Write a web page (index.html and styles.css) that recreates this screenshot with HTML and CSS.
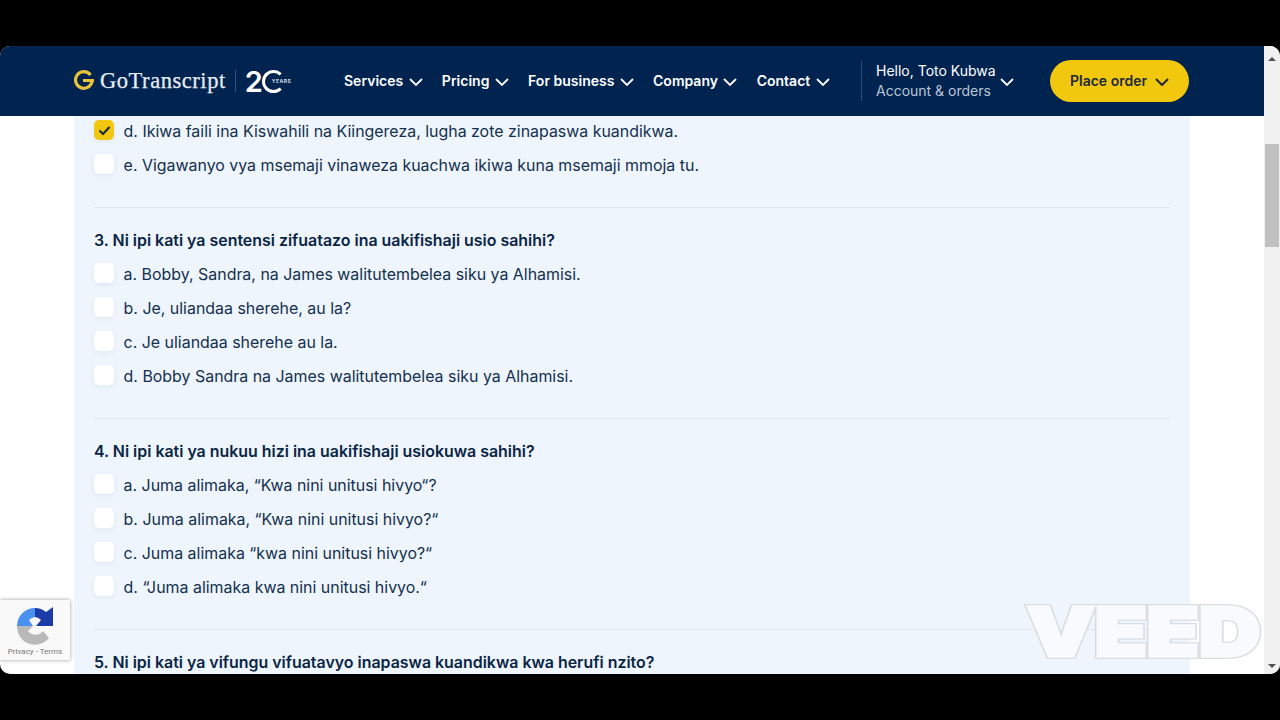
FILE: index.html
```html
<!DOCTYPE html>
<html lang="en">
<head>
    <meta charset="UTF-8">
    <meta name="viewport" content="width=device-width, initial-scale=1.0">
    <title>GoTranscript Quiz</title>
    <link rel="stylesheet" href="styles.css">
</head>
<body>
    <div class="window">
        <div class="page">
            <header class="topbar">
                <div class="logo">
                    <svg class="logo-mark" width="20" height="22" viewBox="0 0 20 22" fill="none">
                        <path d="M16.500 5A8.300 8.300 0 1 0 18 11.500" stroke="#e8c33a" stroke-width="3.200"/>
                        <path d="M9 10.500H20" stroke="#e8c33a" stroke-width="3"/>
                    </svg>
                    <span class="logo-name">GoTranscript</span>
                    <span class="logo-rule"></span>
                    <span class="logo-two">2</span>
                    <span class="logo-ring"></span>
                    <span class="logo-years">YEARS</span>
                </div>
                <nav class="nav">
                    <a class="nav-link"><span>Services</span> <svg class="chev" width="14" height="8" viewBox="0 0 14 8"><path d="M1 1l6 6 6-6"/></svg></a>
                    <a class="nav-link"><span>Pricing</span> <svg class="chev" width="14" height="8" viewBox="0 0 14 8"><path d="M1 1l6 6 6-6"/></svg></a>
                    <a class="nav-link"><span>For business</span> <svg class="chev" width="14" height="8" viewBox="0 0 14 8"><path d="M1 1l6 6 6-6"/></svg></a>
                    <a class="nav-link"><span>Company</span> <svg class="chev" width="14" height="8" viewBox="0 0 14 8"><path d="M1 1l6 6 6-6"/></svg></a>
                    <a class="nav-link"><span>Contact</span> <svg class="chev" width="14" height="8" viewBox="0 0 14 8"><path d="M1 1l6 6 6-6"/></svg></a>
                </nav>
                <div class="account">
                    <div class="account-text">
                        <div class="account-hello">Hello, Toto Kubwa</div>
                        <div class="account-sub">Account &amp; orders</div>
                    </div>
                    <svg class="chev" width="14" height="8" viewBox="0 0 14 8"><path d="M1 1l6 6 6-6"/></svg>
                </div>
                <button class="order-btn"><span>Place order</span> <svg class="chev chev-dark" width="14" height="8" viewBox="0 0 14 8"><path d="M1 1l6 6 6-6"/></svg></button>
            </header>

            <main class="content">
                <div class="panel">
                    <section class="question first">
                        <label class="option"><span class="box checked"><svg width="13" height="11" viewBox="0 0 13 11" fill="none"><path d="M1.500 5.500l3.500 3.500 6.500-7" stroke="#1d2a3a" stroke-width="2.200"/></svg></span>d. Ikiwa faili ina Kiswahili na Kiingereza, lugha zote zinapaswa kuandikwa.</label>
                        <label class="option"><span class="box"></span>e. Vigawanyo vya msemaji vinaweza kuachwa ikiwa kuna msemaji mmoja tu.</label>
                    </section>
                    <section class="question">
                        <h3>3. Ni ipi kati ya sentensi zifuatazo ina uakifishaji usio sahihi?</h3>
                        <label class="option"><span class="box"></span>a. Bobby, Sandra, na James walitutembelea siku ya Alhamisi.</label>
                        <label class="option"><span class="box"></span>b. Je, uliandaa sherehe, au la?</label>
                        <label class="option"><span class="box"></span>c. Je uliandaa sherehe au la.</label>
                        <label class="option"><span class="box"></span>d. Bobby Sandra na James walitutembelea siku ya Alhamisi.</label>
                    </section>
                    <section class="question">
                        <h3>4. Ni ipi kati ya nukuu hizi ina uakifishaji usiokuwa sahihi?</h3>
                        <label class="option"><span class="box"></span>a. Juma alimaka, “Kwa nini unitusi hivyo“?</label>
                        <label class="option"><span class="box"></span>b. Juma alimaka, “Kwa nini unitusi hivyo?“</label>
                        <label class="option"><span class="box"></span>c. Juma alimaka “kwa nini unitusi hivyo?“</label>
                        <label class="option"><span class="box"></span>d. “Juma alimaka kwa nini unitusi hivyo.“</label>
                    </section>
                    <section class="question">
                        <h3>5. Ni ipi kati ya vifungu vifuatavyo inapaswa kuandikwa kwa herufi nzito?</h3>
                    </section>
                </div>
            </main>
        </div>

        <div class="scrollbar">
            <div class="arrow-up"></div>
            <div class="thumb"></div>
            <div class="arrow-down"></div>
        </div>

        <div class="recaptcha">
            <svg width="38" height="40" viewBox="0 0 38 40">
                <path d="M19 2A18 18 0 0 1 30 6L37 1V20H20L25 14A9 9 0 0 0 19 11Z" fill="#1c3aa8"/>
                <path d="M1 20A18 18 0 0 1 19 2V11A9 9 0 0 0 13 14L17 20Z" fill="#4a90ee"/>
                <path d="M1 20H17L12 25A9.500 9.500 0 0 0 27 25L33 32A18 18 0 0 1 1 20Z" fill="#b9b9b9"/>
            </svg>
            <div class="recaptcha-links">Privacy - Terms</div>
        </div>

        <div class="watermark">VEED</div>
    </div>
</body>
</html>
```
FILE: styles.css
```css
* {
    box-sizing: border-box;
}
body {
    margin: 0;
    height: 720px;
    padding: 46px 0;
    background-color: #000;
    font-family: Inter, "Noto Sans", sans-serif;
    overflow: hidden;
}
.window {
    position: relative;
    display: flex;
    height: 628px;
    background-color: #fff;
    border-radius: 10px;
    overflow: hidden;
}
.page {
    flex: 1;
    display: flex;
    flex-direction: column;
    min-width: 0;
}

/* header */
.topbar {
    flex: none;
    display: flex;
    align-items: center;
    height: 70px;
    padding-left: 74px;
    background-color: #00234f;
    color: #fff;
}
.logo {
    display: flex;
    align-items: center;
    flex: none;
    width: 270px;
}
.logo-mark {
    margin-right: 6px;
}
.logo-name {
    font-family: "Liberation Serif", serif;
    font-size: 22.5px;
    letter-spacing: 0.55px;
    color: #e6edf5;
    -webkit-text-stroke: 0.25px #e6edf5;
}
.logo-rule {
    width: 1px;
    height: 22px;
    margin: 0 9px;
    background-color: #35527a;
}
.logo-two {
    font-size: 29px;
    font-weight: 600;
    line-height: 1;
}
.logo-ring {
    width: 23px;
    height: 23px;
    margin-left: -1px;
    border: 3px solid #fff;
    border-right-color: transparent;
    border-radius: 50%;
}
.logo-years {
    margin-left: -13px;
    font-size: 5px;
    font-weight: 700;
    letter-spacing: 0.5px;
    color: #d5dde8;
}
.nav {
    flex: none;
    display: flex;
    gap: 19.200px;
    width: 517px;
}
.nav-link {
    display: flex;
    align-items: center;
    gap: 5.500px;
    font-size: 14px;
    font-weight: 600;
}
.nav-link span,
.order-btn span {
    margin-bottom: 2px;
}
.chev {
    flex: none;
    margin-top: 2px;
}
.chev path {
    fill: none;
    stroke: #fff;
    stroke-width: 1.8;
}
.chev-dark path {
    stroke: #1d2a3a;
    stroke-width: 2;
}
.account {
    flex: none;
    display: flex;
    align-items: center;
    gap: 4px;
    height: 40px;
    padding-left: 14px;
    border-left: 1px solid #2d4a72;
    width: 189px;
}
.account-text {
    font-size: 14px;
    line-height: 20px;
}
.account-sub {
    color: #b9c6d8;
}
.order-btn {
    flex: none;
    display: flex;
    align-items: center;
    justify-content: center;
    gap: 8px;
    width: 139px;
    height: 42px;
    border: none;
    border-radius: 21px;
    background-color: #f2c80f;
    color: #1d2a3a;
    font-family: inherit;
    font-size: 14px;
    font-weight: 600;
}

/* quiz */
.content {
    flex: 1;
    overflow: hidden;
}
.panel {
    margin-right: 74px;
    margin-left: 74px;
    padding: 0 20px;
    height: 100%;
    background-color: #eef5fc;
    overflow: hidden;
}
.question {
    display: flex;
    flex-direction: column;
    gap: 14px;
    padding: 22px 0 32px;
    border-bottom: 1px solid #e0e7ee;
}
.question.first {
    padding-top: 5px;
}
.question:last-child {
    border-bottom: none;
}
.question h3 {
    margin: 0 0 -2px;
    font-size: 15.930px;
    line-height: 22px;
    font-weight: 600;
    color: #0b2545;
}
.option {
    display: flex;
    align-items: center;
    gap: 9.600px;
    height: 20px;
    font-size: 15.930px;
    color: #14304f;
}
.box {
    flex: none;
    display: flex;
    align-items: center;
    justify-content: center;
    width: 20px;
    height: 20px;
    margin-top: -2px;
    border-radius: 5px;
    background-color: #fff;
    box-shadow: 0 2px 5px rgba(20, 50, 90, 0.06);
}
.box.checked {
    background-color: #f2c80f;
}

/* fake browser scrollbar */
.scrollbar {
    flex: none;
    position: relative;
    width: 16px;
    background-color: #f1f1f1;
}
.arrow-up,
.arrow-down {
    position: absolute;
    left: 4px;
    width: 0;
    height: 0;
    border-left: 4px solid transparent;
    border-right: 4px solid transparent;
}
.arrow-up {
    top: 11px;
    border-bottom: 4px solid #505050;
}
.arrow-down {
    bottom: 6px;
    border-top: 4px solid #505050;
}
.thumb {
    position: absolute;
    top: 98px;
    left: 1px;
    width: 14px;
    height: 103px;
    background-color: #c1c1c1;
}

/* overlays */
.recaptcha {
    position: absolute;
    left: 0;
    top: 554px;
    display: flex;
    flex-direction: column;
    align-items: center;
    width: 70px;
    height: 60px;
    padding-top: 6px;
    background-color: #f9f9f9;
    box-shadow: 0 0 4px rgba(0, 0, 0, 0.4);
}
.recaptcha-links {
    font-family: Roboto, sans-serif;
    font-size: 8px;
    color: #777;
    margin-top: 1px;
}
.watermark {
    position: absolute;
    left: 1027px;
    top: 541px;
    font-size: 67px;
    line-height: 90px;
    font-weight: 900;
    white-space: nowrap;
    color: #d9dde1;
    -webkit-text-stroke: 6px #d9dde1;
    transform: scaleX(1.27);
    transform-origin: left center;
}
.watermark::after {
    content: "VEED";
    position: absolute;
    left: 0;
    top: 0;
    color: #f8fafd;
    -webkit-text-stroke: 3.500px #f8fafd;
}
```
